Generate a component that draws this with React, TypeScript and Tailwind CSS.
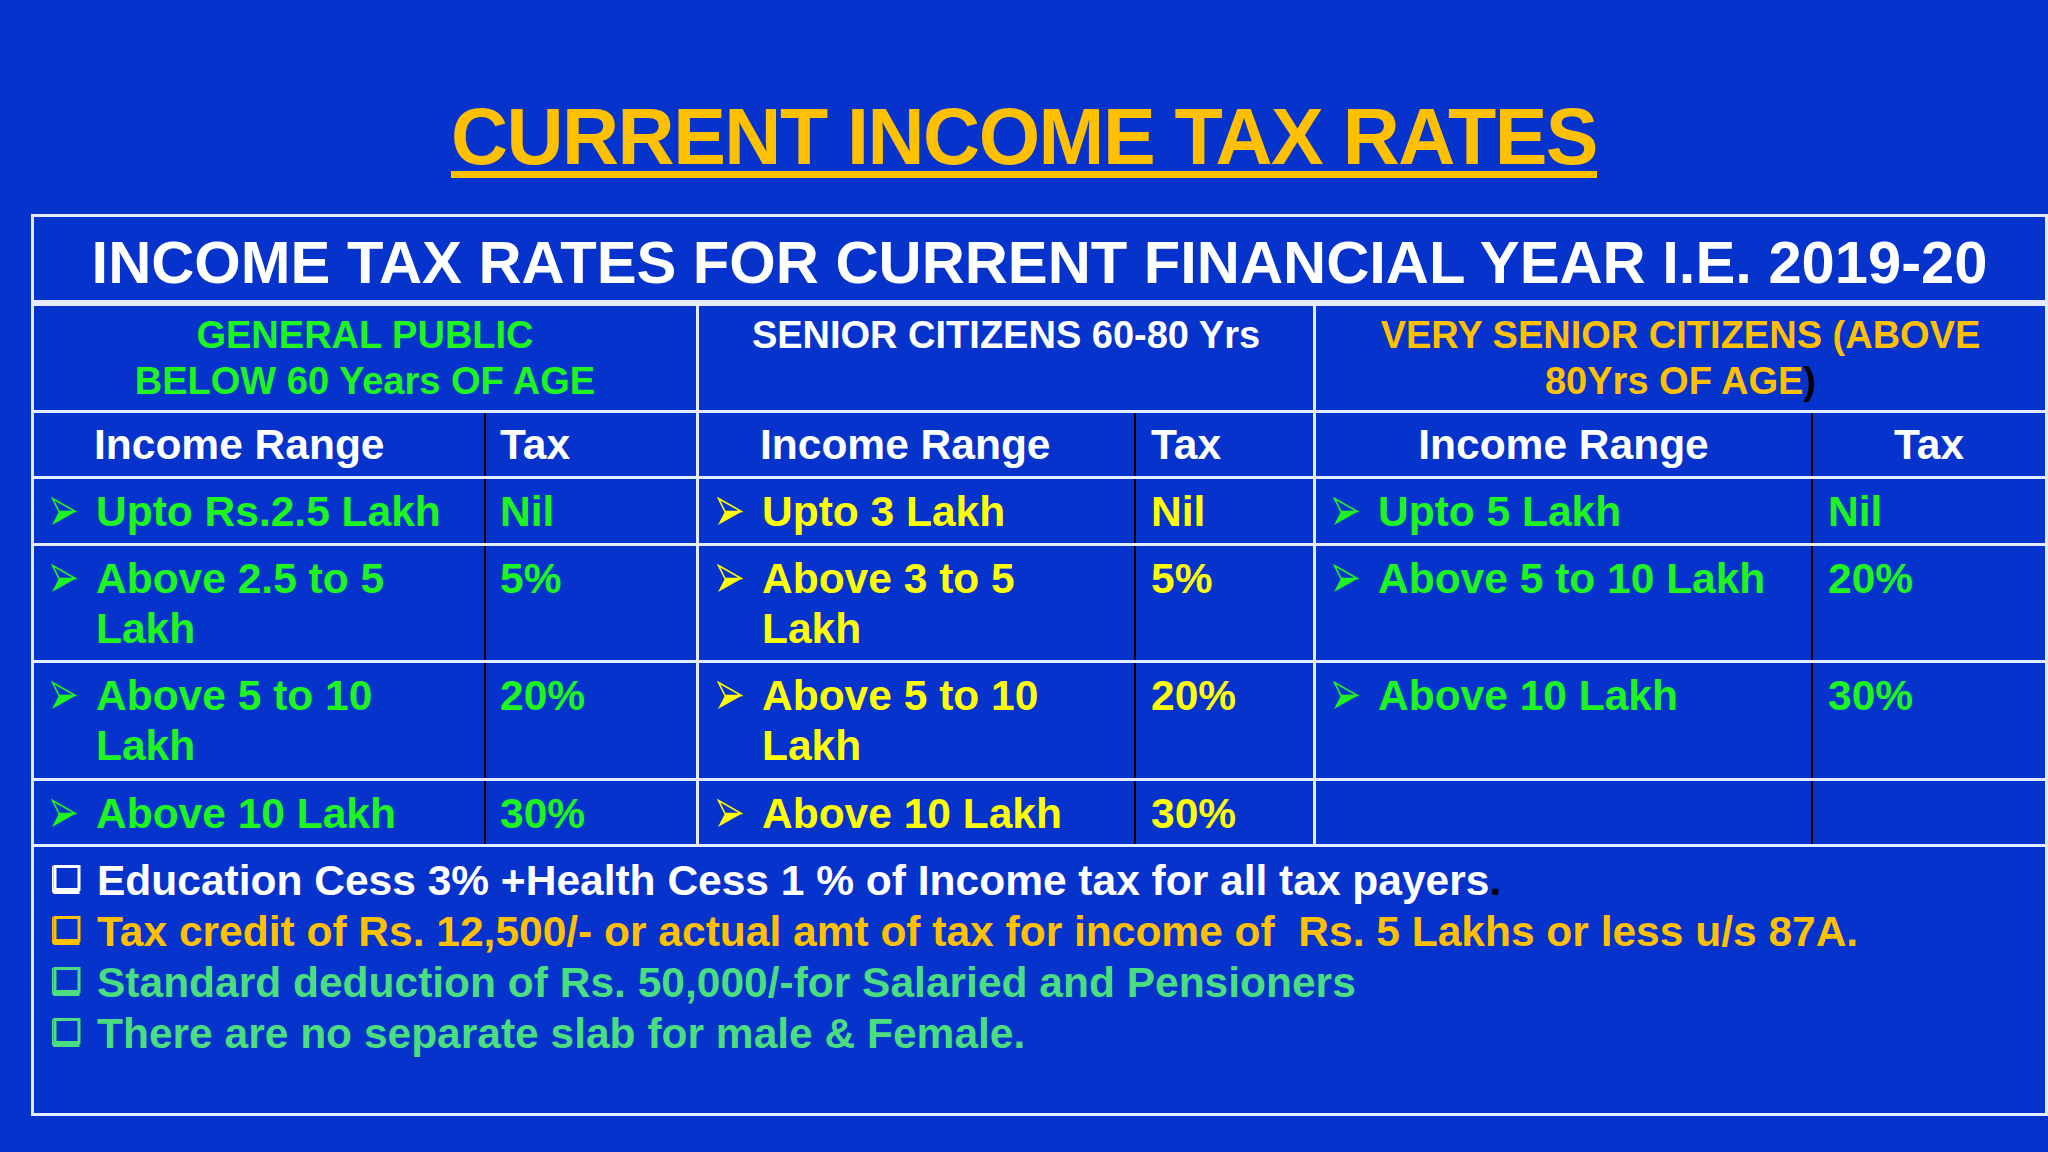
import React from "react";

const LINE = "border-[#e4ebff]";

const Arrow = ({ c }: { c: string }) => (
  <svg width="26" height="29" viewBox="0 0 26 29" className="shrink-0 mt-[10px]">
    <polygon points="1.5,1.5 24.5,14.5 8,14.5" fill="none" stroke={c} strokeWidth="1.6" strokeLinejoin="miter" />
    <polygon points="8,14.5 25,14.5 1,28" fill={c} />
  </svg>
);

const Box = ({ c }: { c: string }) => (
  <svg width="30" height="30" viewBox="0 0 30 30" className="shrink-0 mt-[10px]">
    <rect x="4" y="1.5" width="24" height="23" fill="none" stroke={c} strokeWidth="3" />
    <polygon points="2.5,24 1,25.5 1,27 3,29 28.5,29 28.5,24" fill={c} />
    <polygon points="2.5,0 1,1.5 1,27 2.5,27" fill={c} />
  </svg>
);

const Inc = ({
  c,
  text,
}: {
  c: "g" | "y";
  text: React.ReactNode;
}) => (
  <div className="flex items-start gap-[19px]">
    <Arrow c={c === "g" ? "#1ef51e" : "#ffff00"} />
    <div className={c === "g" ? "text-[#1ef51e] whitespace-nowrap" : "text-[#ffff00] whitespace-nowrap"}>{text}</div>
  </div>
);

export default function App() {
  return (
    <div className="w-[2048px] h-[1152px] bg-[#0533cc] font-['Liberation_Sans',Arial,sans-serif] font-bold overflow-hidden">
      <div className="h-[214px] pt-[97px] text-center text-[79px] leading-[79px] tracking-[-1.5px] text-[#ffc000]">
        <span className="underline decoration-[7px] underline-offset-[7px]">CURRENT INCOME TAX RATES</span>
      </div>

      <div className={`ml-[31px] w-[2017px] border-[3px] ${LINE} flex flex-col`}>
        {/* Header */}
        <div className={`h-[89px] pt-[16px] text-center text-white text-[59.7px] leading-[59px] border-b-[6px] ${LINE}`}>
          INCOME TAX RATES FOR CURRENT FINANCIAL YEAR I.E. 2019-20
        </div>

        {/* Group header */}
        <div className={`h-[107px] flex border-b-[3px] ${LINE} text-[38px] leading-[46px] text-center`}>
          <div className={`w-[665px] border-r-[3px] ${LINE} pt-[6px] text-[#1ef51e]`}>
            GENERAL PUBLIC
            <br />
            BELOW 60 Years OF AGE
          </div>
          <div className={`w-[617px] border-r-[3px] ${LINE} pt-[6px] text-white`}>SENIOR CITIZENS 60-80 Yrs</div>
          <div className="flex-1 pt-[6px] text-[#ffc000]">
            VERY SENIOR CITIZENS (ABOVE
            <br />
            80Yrs OF AGE<span className="text-black">)</span>
          </div>
        </div>

        {/* Sub header */}
        <div className={`h-[66px] flex border-b-[3px] ${LINE} text-[42.5px] leading-[50px] text-white`}>
          <div className="w-[452px] border-r-2 border-black pl-[60px] pt-[7px]">Income Range</div>
          <div className={`w-[213px] border-r-[3px] ${LINE} pl-[14px] pt-[7px]`}>Tax</div>
          <div className="w-[437px] border-r-2 border-black pl-[61px] pt-[7px]">Income Range</div>
          <div className={`w-[180px] border-r-[3px] ${LINE} pl-[15px] pt-[7px]`}>Tax</div>
          <div className="w-[497px] border-r-2 border-black pt-[7px] text-center">Income Range</div>
          <div className="flex-1 pt-[7px] text-center">Tax</div>
        </div>

        {/* Row 1 */}
        <div className={`h-[67px] flex border-b-[3px] ${LINE} text-[42.5px] leading-[50px]`}>
          <div className="w-[452px] border-r-2 border-black pl-[17px] pt-[8px]">
            <Inc c="g" text="Upto Rs.2.5 Lakh" />
          </div>
          <div className={`w-[213px] border-r-[3px] ${LINE} pl-[14px] pt-[8px] text-[#1ef51e]`}>Nil</div>
          <div className="w-[437px] border-r-2 border-black pl-[18px] pt-[8px]">
            <Inc c="y" text="Upto 3 Lakh" />
          </div>
          <div className={`w-[180px] border-r-[3px] ${LINE} pl-[15px] pt-[8px] text-[#ffff00]`}>Nil</div>
          <div className="w-[497px] border-r-2 border-black pl-[17px] pt-[8px]">
            <Inc c="g" text="Upto 5 Lakh" />
          </div>
          <div className="flex-1 pl-[15px] pt-[8px] text-[#1ef51e]">Nil</div>
        </div>

        {/* Row 2 */}
        <div className={`h-[117px] flex border-b-[3px] ${LINE} text-[42.5px] leading-[50px]`}>
          <div className="w-[452px] border-r-2 border-black pl-[17px] pt-[8px]">
            <Inc
              c="g"
              text={
                <>
                  Above 2.5 to 5
                  <br />
                  Lakh
                </>
              }
            />
          </div>
          <div className={`w-[213px] border-r-[3px] ${LINE} pl-[14px] pt-[8px] text-[#1ef51e]`}>5%</div>
          <div className="w-[437px] border-r-2 border-black pl-[18px] pt-[8px]">
            <Inc
              c="y"
              text={
                <>
                  Above 3 to 5
                  <br />
                  Lakh
                </>
              }
            />
          </div>
          <div className={`w-[180px] border-r-[3px] ${LINE} pl-[15px] pt-[8px] text-[#ffff00]`}>5%</div>
          <div className="w-[497px] border-r-2 border-black pl-[17px] pt-[8px]">
            <Inc c="g" text="Above 5 to 10 Lakh" />
          </div>
          <div className="flex-1 pl-[15px] pt-[8px] text-[#1ef51e]">20%</div>
        </div>

        {/* Row 3 */}
        <div className={`h-[118px] flex border-b-[3px] ${LINE} text-[42.5px] leading-[50px]`}>
          <div className="w-[452px] border-r-2 border-black pl-[17px] pt-[8px]">
            <Inc
              c="g"
              text={
                <>
                  Above 5 to 10
                  <br />
                  Lakh
                </>
              }
            />
          </div>
          <div className={`w-[213px] border-r-[3px] ${LINE} pl-[14px] pt-[8px] text-[#1ef51e]`}>20%</div>
          <div className="w-[437px] border-r-2 border-black pl-[18px] pt-[8px]">
            <Inc
              c="y"
              text={
                <>
                  Above 5 to 10
                  <br />
                  Lakh
                </>
              }
            />
          </div>
          <div className={`w-[180px] border-r-[3px] ${LINE} pl-[15px] pt-[8px] text-[#ffff00]`}>20%</div>
          <div className="w-[497px] border-r-2 border-black pl-[17px] pt-[8px]">
            <Inc c="g" text="Above 10 Lakh" />
          </div>
          <div className="flex-1 pl-[15px] pt-[8px] text-[#1ef51e]">30%</div>
        </div>

        {/* Row 4 */}
        <div className={`h-[66px] flex border-b-[3px] ${LINE} text-[42.5px] leading-[50px]`}>
          <div className="w-[452px] border-r-2 border-black pl-[17px] pt-[8px]">
            <Inc c="g" text="Above 10 Lakh" />
          </div>
          <div className={`w-[213px] border-r-[3px] ${LINE} pl-[14px] pt-[8px] text-[#1ef51e]`}>30%</div>
          <div className="w-[437px] border-r-2 border-black pl-[18px] pt-[8px]">
            <Inc c="y" text="Above 10 Lakh" />
          </div>
          <div className={`w-[180px] border-r-[3px] ${LINE} pl-[15px] pt-[8px] text-[#ffff00]`}>30%</div>
          <div className="w-[497px] border-r-2 border-black" />
          <div className="flex-1" />
        </div>

        {/* Notes */}
        <div className="h-[266px] pl-[17px] pt-[8px] text-[42.5px] leading-[51px] whitespace-pre">
          <div className="flex items-start gap-[16px] text-white">
            <Box c="#ffffff" />
            <div>
              Education Cess 3% +Health Cess 1 % of Income tax for all tax payers<span className="text-black">.</span>
            </div>
          </div>
          <div className="flex items-start gap-[16px] text-[#ffc000]">
            <Box c="#ffc000" />
            <div>Tax credit of Rs. 12,500/- or actual amt of tax for income of  Rs. 5 Lakhs or less u/s 87A.</div>
          </div>
          <div className="flex items-start gap-[16px] text-[#4ade80]">
            <Box c="#4ade80" />
            <div>Standard deduction of Rs. 50,000/-for Salaried and Pensioners</div>
          </div>
          <div className="flex items-start gap-[16px] text-[#4ade80]">
            <Box c="#4ade80" />
            <div>There are no separate slab for male &amp; Female.</div>
          </div>
        </div>
      </div>
    </div>
  );
}
